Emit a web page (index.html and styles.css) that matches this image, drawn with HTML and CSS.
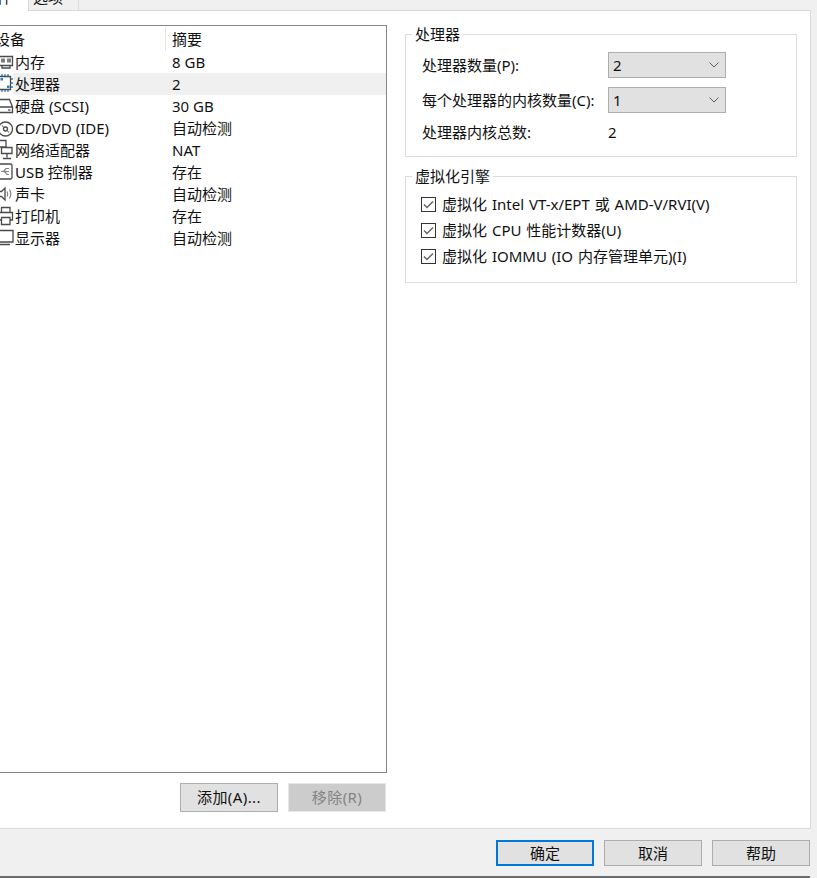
FILE: index.html
```html
<!DOCTYPE html>
<html lang="zh">
<head>
  <meta charset="UTF-8" />
  <title>虚拟机设置</title>
  <link rel="stylesheet" href="styles.css">
</head>
<body>
  <div class="tabs">
    <div class="tab tab-active"><span>硬件</span></div>
    <div class="tab"><span>选项</span></div>
    <div class="tabs-rest"></div>
  </div>

  <div class="panel">
    <div class="left">
      <div class="list">
        <div class="list-head">
          <div class="head-name">设备</div>
          <div class="head-summary">摘要</div>
        </div>

        <div class="row">
          <svg class="icon" viewBox="0 0 14 22"><path class="ln" d="M-1 5.500h13.500v9h-13.500M2 14.500v2.500h8v-2.500"/><path class="fill" d="M1 7.500h4v4h-4zM7 7.500h4v4h-4z"/></svg>
          <div class="name">内存</div>
          <div class="summary">8 GB</div>
        </div>
        <div class="row selected">
          <svg class="icon" viewBox="0 0 14 22"><path class="pin" d="M2 1v2.500M5 1v2.500M8 1v2.500M2 16.500v2.500M5 16.500v2.500M8 16.500v2.500M10.500 6h2.500M10.500 10h2.500M10.500 14h2.500"/><path class="ln" d="M-1 3.500h11.500v13h-11.500"/><path class="blue" d="M0.500 5h2.500v2.500h-2.500zM7 12.500h2.500v2.500h-2.500z"/></svg>
          <div class="name">处理器</div>
          <div class="summary">2</div>
        </div>
        <div class="row">
          <svg class="icon" viewBox="0 0 14 22"><path class="ln" d="M-1 4.500h10.500l3 7.500v5.500h-13.500M-1 12h13.500"/><path class="ln" d="M8 15h2.500"/></svg>
          <div class="name">硬盘 (SCSI)</div>
          <div class="summary">30 GB</div>
        </div>
        <div class="row">
          <svg class="icon" viewBox="0 0 14 22"><circle class="ln" cx="5.500" cy="12" r="7"/><circle class="ln" cx="5.500" cy="12" r="2"/><path class="soft" d="M2 8.500l1.500 1.500M9 15.500l-1.500-1.500"/></svg>
          <div class="name">CD/DVD (IDE)</div>
          <div class="summary">自动检测</div>
        </div>
        <div class="row">
          <svg class="icon" viewBox="0 0 14 22"><path class="ln" d="M-1 1.500h7v6.500h-7M1.500 8.500h10.500v6h-10.500zM7 14.500v4M3 19.500h8"/></svg>
          <div class="name">网络适配器</div>
          <div class="summary">NAT</div>
        </div>
        <div class="row">
          <svg class="icon" viewBox="0 0 14 22"><path class="ln" d="M-1 3h11.500q1.500 0 1.500 1.500v12q0 1.500-1.500 1.500h-11.500"/><path class="soft" d="M1 10.500h8M3.500 10.500l2.500-3h3M4.500 10.500l2.500 3h2"/></svg>
          <div class="name">USB 控制器</div>
          <div class="summary">存在</div>
        </div>
        <div class="row">
          <svg class="icon" viewBox="0 0 14 22"><path class="ln" d="M-1 8.500h2.500l3.500-3.500v12l-3.500-3.500h-2.500"/><path class="soft" d="M7 8.500q1.500 2.500 0 5M9.500 6.500q2.500 4.500 0 9"/></svg>
          <div class="name">声卡</div>
          <div class="summary">自动检测</div>
        </div>
        <div class="row">
          <svg class="icon" viewBox="0 0 14 22"><path class="ln" d="M1.500 7.500v-5h8.500v5M-1 7.500h13.500v7.500h-2.500M-1 15h2.500M1.500 12.500h8.500v7h-8.500z"/></svg>
          <div class="name">打印机</div>
          <div class="summary">存在</div>
        </div>
        <div class="row">
          <svg class="icon" viewBox="0 0 14 22"><path class="ln" d="M-1 3.500h14v11.500h-14M-1 17.500h11"/></svg>
          <div class="name">显示器</div>
          <div class="summary">自动检测</div>
        </div>
      </div>

      <div class="list-buttons">
        <button class="btn">添加(A)...</button>
        <button class="btn btn-disabled">移除(R)</button>
      </div>
    </div>

    <div class="right">
      <fieldset class="group group-cpu">
        <legend>处理器</legend>
        <div class="form">
          <label>处理器数量(P):</label>
          <div class="select"><span>2</span><svg class="chevron" viewBox="0 0 10 6"><path d="M0.500 0.500l4.500 4.500 4.500-4.500"/></svg></div>
          <label>每个处理器的内核数量(C):</label>
          <div class="select"><span>1</span><svg class="chevron" viewBox="0 0 10 6"><path d="M0.500 0.500l4.500 4.500 4.500-4.500"/></svg></div>
          <label>处理器内核总数:</label>
          <div class="total">2</div>
        </div>
      </fieldset>

      <fieldset class="group group-engine">
        <legend>虚拟化引擎</legend>
        <div class="checks">
          <div class="check"><svg class="checkbox" viewBox="0 0 15 15"><rect x="0.500" y="0.500" width="14" height="14"/><path d="M3 7.500l3 3 6-6"/></svg>虚拟化 Intel VT-x/EPT 或 AMD-V/RVI(V)</div>
          <div class="check"><svg class="checkbox" viewBox="0 0 15 15"><rect x="0.500" y="0.500" width="14" height="14"/><path d="M3 7.500l3 3 6-6"/></svg>虚拟化 CPU 性能计数器(U)</div>
          <div class="check"><svg class="checkbox" viewBox="0 0 15 15"><rect x="0.500" y="0.500" width="14" height="14"/><path d="M3 7.500l3 3 6-6"/></svg>虚拟化 IOMMU (IO 内存管理单元)(I)</div>
        </div>
      </fieldset>
    </div>
  </div>

  <div class="footer">
    <button class="btn btn-primary">确定</button>
    <button class="btn">取消</button>
    <button class="btn">帮助</button>
  </div>
</body>
</html>
```

FILE: styles.css
```css
html, body {
  margin: 0;
  padding: 0;
}
body {
  width: 817px;
  height: 878px;
  overflow: hidden;
  background: #f0f0f0;
  color: #111111;
  font-family: "Noto Sans", "Noto Sans CJK SC", sans-serif;
  font-size: 15px;
}

.tabs {
  display: flex;
  width: 811px;
  height: 11px;
}
.tab {
  width: 49px;
  height: 10px;
  overflow: hidden;
  background: #f0f0f0;
  border-left: 1px solid #d9d9d9;
  border-bottom: 1px solid #d9d9d9;
  border-right: 1px solid #d9d9d9;
}
.tab span {
  display: block;
  margin: -13px 0 0 4px;
  line-height: 20px;
}
.tab-active {
  width: 28px;
  height: 11px;
  background: white;
  border: 0;
}
.tab-active span {
  margin-left: -18px;
}
.tabs-rest {
  flex: 1;
  border-bottom: 1px solid #d9d9d9;
}

.panel {
  display: flex;
  width: 810px;
  height: 803px;
  padding-top: 14px;
  background: white;
  border-right: 1px solid #d9d9d9;
  border-bottom: 1px solid #d9d9d9;
}
.left {
  width: 388px;
  margin-left: -1px;
  margin-right: 18px;
}
.right {
  width: 392px;
}

.list {
  height: 748px;
  box-sizing: border-box;
  border: 1px solid #828790;
  background: white;
}
.list-head {
  display: flex;
  height: 25px;
}
.head-name {
  width: 166px;
  height: 24px;
  margin-top: 1px;
  line-height: 24px;
  text-indent: -5px;
  white-space: nowrap;
  box-sizing: border-box;
  border-right: 1px solid #e5e5e5;
}
.head-summary {
  padding-left: 6px;
  line-height: 26px;
}
.row {
  display: flex;
  height: 22px;
  line-height: 23px;
}
.icon {
  flex: none;
  width: 14px;
  height: 22px;
  margin-right: -1px;
  overflow: visible;
}
.icon .ln {
  fill: none;
  stroke: #4a4a4a;
  stroke-width: 1.300;
}
.icon .soft {
  fill: none;
  stroke: #808080;
  stroke-width: 1.200;
}
.icon .fill {
  fill: #7c7c7c;
}
.icon .pin {
  fill: none;
  stroke: #2f7fc1;
  stroke-width: 1.300;
}
.icon .blue {
  fill: #2f7fc1;
}
.name {
  width: 153px;
  padding-left: 2px;
  box-sizing: border-box;
}
.summary {
  flex: 1;
  padding-left: 6px;
}
.selected .name,
.selected .summary {
  background: #f0f0f0;
}

.list-buttons {
  display: flex;
  justify-content: flex-end;
  gap: 10px;
  margin-top: 10px;
  margin-right: 1px;
}
.list-buttons .btn {
  letter-spacing: 0.4px;
}
.btn {
  width: 98px;
  height: 29px;
  padding: 0 0 2px;
  box-sizing: border-box;
  background: #e1e1e1;
  border: 1px solid #adadad;
  color: #111111;
  font-family: inherit;
  font-size: 15px;
}
.btn-disabled {
  background: #cccccc;
  border-color: #e6e6e6;
  color: #838383;
}
.btn-primary {
  border: 2px solid #0078d7;
}

.group {
  margin: 0;
  padding: 0 0 13px;
  border: 1px solid #dcdcdc;
}
.group legend {
  margin-left: 6px;
  padding: 0 3px;
  line-height: 18px;
}
.group-cpu {
  padding-bottom: 14px;
}
.group-engine {
  margin-top: 10px;
}

.form {
  display: grid;
  grid-template-columns: 186px 118px;
  align-items: center;
  row-gap: 9px;
  padding: 9px 0 0 16px;
}
.form label {
  line-height: 20px;
  white-space: nowrap;
}
.select {
  display: flex;
  align-items: center;
  justify-content: space-between;
  height: 26px;
  padding: 0 6px 0 4px;
  box-sizing: border-box;
  background: #e1e1e1;
  border: 1px solid #adadad;
}
.chevron {
  width: 10px;
  height: 6px;
}
.chevron path {
  fill: none;
  stroke: #5c5c5c;
  stroke-width: 1;
}
.total {
  line-height: 20px;
}

.checks {
  padding: 6px 0 0 15px;
}
.check {
  display: flex;
  align-items: center;
  height: 26px;
  padding-bottom: 2px;
  box-sizing: border-box;
  white-space: pre;
  word-spacing: 1px;
}
.checkbox {
  flex: none;
  width: 15px;
  height: 15px;
  margin-right: 6px;
  margin-top: 2px;
}
.checkbox rect {
  fill: white;
  stroke: #333333;
}
.checkbox path {
  fill: none;
  stroke: #666666;
  stroke-width: 1.500;
}

.footer {
  display: flex;
  justify-content: flex-end;
  gap: 10px;
  width: 810px;
  height: 49px;
  padding-top: 11px;
  box-sizing: border-box;
  border-bottom: 2px solid #6b6b6b;
}
.footer .btn {
  height: 26px;
}
```
